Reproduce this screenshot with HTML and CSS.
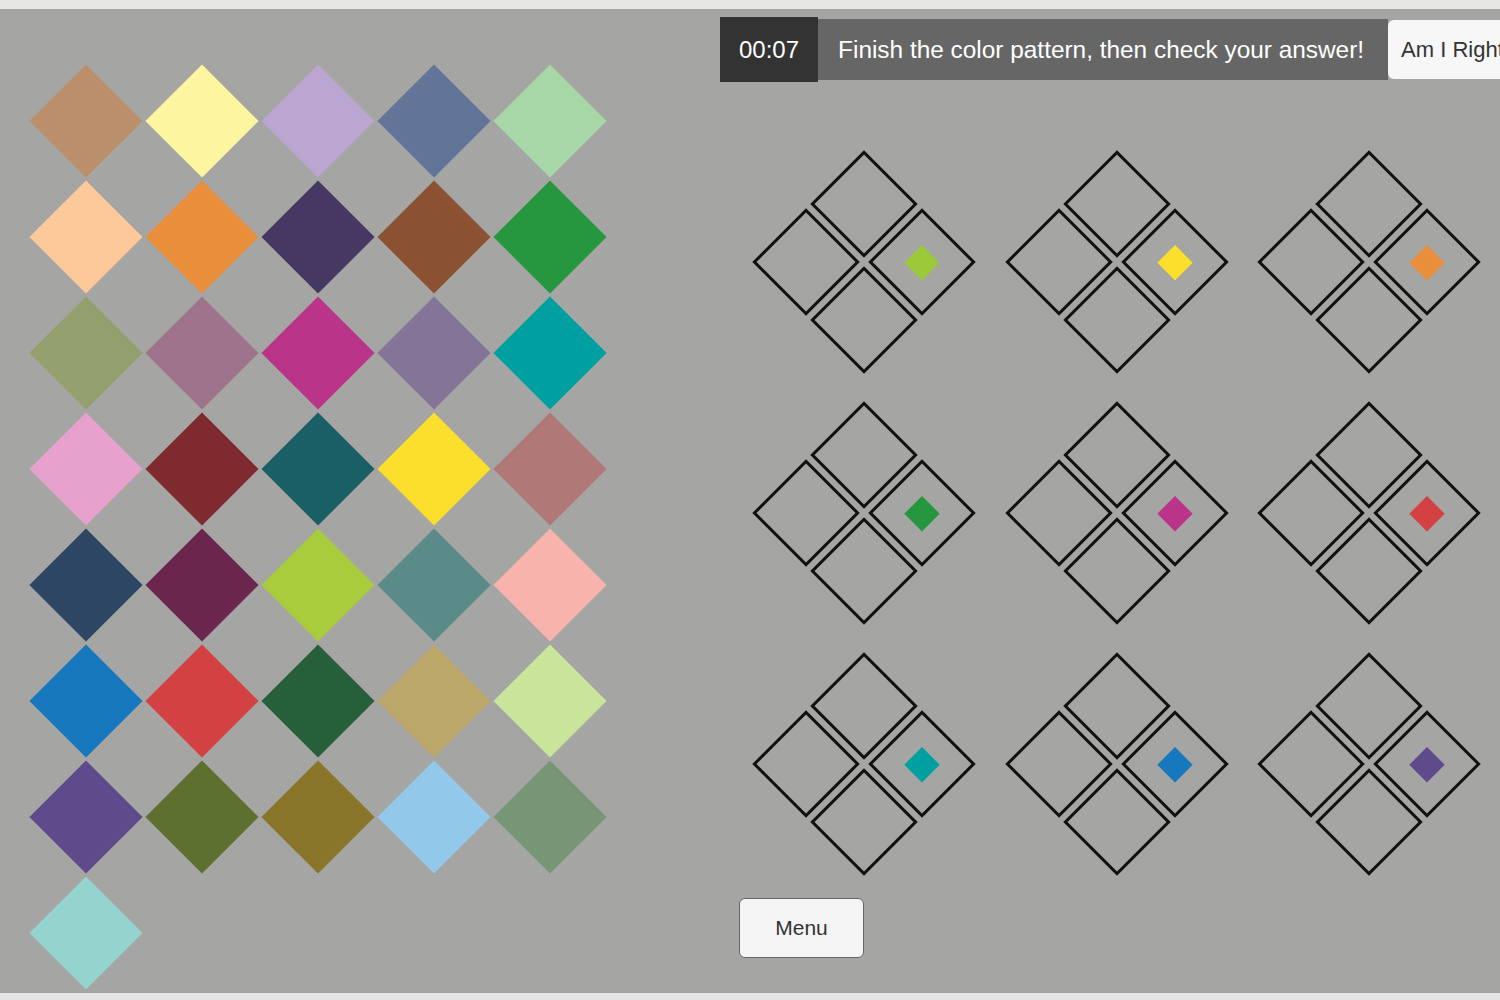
FILE: index.html
```html
<!DOCTYPE html>
<html lang="en">
<head>
<meta charset="utf-8">
<title>Color Pattern</title>
<link rel="stylesheet" href="styles.css">
</head>
<body>
<div class="game">
  <div class="palette">
    <div class="cell"><div class="gem c1"></div></div>
    <div class="cell"><div class="gem c2"></div></div>
    <div class="cell"><div class="gem c3"></div></div>
    <div class="cell"><div class="gem c4"></div></div>
    <div class="cell"><div class="gem c5"></div></div>
    <div class="cell"><div class="gem c6"></div></div>
    <div class="cell"><div class="gem c7"></div></div>
    <div class="cell"><div class="gem c8"></div></div>
    <div class="cell"><div class="gem c9"></div></div>
    <div class="cell"><div class="gem c10"></div></div>
    <div class="cell"><div class="gem c11"></div></div>
    <div class="cell"><div class="gem c12"></div></div>
    <div class="cell"><div class="gem c13"></div></div>
    <div class="cell"><div class="gem c14"></div></div>
    <div class="cell"><div class="gem c15"></div></div>
    <div class="cell"><div class="gem c16"></div></div>
    <div class="cell"><div class="gem c17"></div></div>
    <div class="cell"><div class="gem c18"></div></div>
    <div class="cell"><div class="gem c19"></div></div>
    <div class="cell"><div class="gem c20"></div></div>
    <div class="cell"><div class="gem c21"></div></div>
    <div class="cell"><div class="gem c22"></div></div>
    <div class="cell"><div class="gem c23"></div></div>
    <div class="cell"><div class="gem c24"></div></div>
    <div class="cell"><div class="gem c25"></div></div>
    <div class="cell"><div class="gem c26"></div></div>
    <div class="cell"><div class="gem c27"></div></div>
    <div class="cell"><div class="gem c28"></div></div>
    <div class="cell"><div class="gem c29"></div></div>
    <div class="cell"><div class="gem c30"></div></div>
    <div class="cell"><div class="gem c31"></div></div>
    <div class="cell"><div class="gem c32"></div></div>
    <div class="cell"><div class="gem c33"></div></div>
    <div class="cell"><div class="gem c34"></div></div>
    <div class="cell"><div class="gem c35"></div></div>
    <div class="cell"><div class="gem c36"></div></div>
  </div>

  <div class="board">
    <div class="header">
      <div class="timer">00:07</div>
      <div class="instruction">Finish the color pattern, then check your answer!</div>
      <button class="check">Am I Right?</button>
    </div>

    <div class="puzzles">
      <div class="puzzle"><div class="quad"><div class="slot"></div><div class="slot"><div class="dot d-lime"></div></div><div class="slot"></div><div class="slot"></div></div></div>
      <div class="puzzle"><div class="quad"><div class="slot"></div><div class="slot"><div class="dot d-yellow"></div></div><div class="slot"></div><div class="slot"></div></div></div>
      <div class="puzzle"><div class="quad"><div class="slot"></div><div class="slot"><div class="dot d-orange"></div></div><div class="slot"></div><div class="slot"></div></div></div>
      <div class="puzzle"><div class="quad"><div class="slot"></div><div class="slot"><div class="dot d-green"></div></div><div class="slot"></div><div class="slot"></div></div></div>
      <div class="puzzle"><div class="quad"><div class="slot"></div><div class="slot"><div class="dot d-magenta"></div></div><div class="slot"></div><div class="slot"></div></div></div>
      <div class="puzzle"><div class="quad"><div class="slot"></div><div class="slot"><div class="dot d-red"></div></div><div class="slot"></div><div class="slot"></div></div></div>
      <div class="puzzle"><div class="quad"><div class="slot"></div><div class="slot"><div class="dot d-teal"></div></div><div class="slot"></div><div class="slot"></div></div></div>
      <div class="puzzle"><div class="quad"><div class="slot"></div><div class="slot"><div class="dot d-blue"></div></div><div class="slot"></div><div class="slot"></div></div></div>
      <div class="puzzle"><div class="quad"><div class="slot"></div><div class="slot"><div class="dot d-purple"></div></div><div class="slot"></div><div class="slot"></div></div></div>
    </div>

    <div class="footer">
      <button class="menu">Menu</button>
    </div>
  </div>
</div>
</body>
</html>
```

FILE: styles.css
```css
html, body {
  margin: 0;
  padding: 0;
}
body {
  background: #e6e6e6;
  font-family: "Liberation Sans", Arial, sans-serif;
  overflow: hidden;
}
.game {
  margin-top: 9px;
  height: 984px;
  background: #a5a5a3;
  display: flex;
  overflow: hidden;
}

/* palette */
.palette {
  flex: 0 0 720px;
  box-sizing: border-box;
  padding: 54px 0 0 28px;
  display: grid;
  grid-template-columns: repeat(5, 116px);
  grid-auto-rows: 116px;
  align-content: start;
}
.cell {
  display: flex;
  align-items: center;
  justify-content: center;
}
.gem {
  width: 80px;
  height: 80px;
  transform: rotate(45deg);
}
.c1 { background: #bb8f6b; }
.c2 { background: #fdf59f; }
.c3 { background: #baa6d0; }
.c4 { background: #627599; }
.c5 { background: #a8d8a8; }
.c6 { background: #fdc99b; }
.c7 { background: #e98e3a; }
.c8 { background: #463862; }
.c9 { background: #8a5232; }
.c10 { background: #26973f; }
.c11 { background: #93a06d; }
.c12 { background: #9f738c; }
.c13 { background: #ba348a; }
.c14 { background: #837498; }
.c15 { background: #00a0a0; }
.c16 { background: #e6a2cd; }
.c17 { background: #7e2a2e; }
.c18 { background: #1a5f65; }
.c19 { background: #fbdf2c; }
.c20 { background: #b07876; }
.c21 { background: #2c4663; }
.c22 { background: #6a264d; }
.c23 { background: #a8cc3c; }
.c24 { background: #5a8b89; }
.c25 { background: #f8b4ac; }
.c26 { background: #1878bd; }
.c27 { background: #d34143; }
.c28 { background: #26603b; }
.c29 { background: #bca86a; }
.c30 { background: #c9e59b; }
.c31 { background: #5f4b8b; }
.c32 { background: #5e7030; }
.c33 { background: #8a762a; }
.c34 { background: #92c9ea; }
.c35 { background: #779676; }
.c36 { background: #95d3cf; }

/* board */
.board {
  flex: 1 1 auto;
  min-width: 0;
  padding-top: 8px;
  display: flex;
  flex-direction: column;
}
.header {
  display: flex;
  align-items: center;
  white-space: nowrap;
}
.timer {
  flex: 0 0 auto;
  height: 65px;
  line-height: 65px;
  padding: 0 19px;
  background: #333333;
  color: #ffffff;
  font-size: 24px;
}
.instruction {
  flex: 0 0 auto;
  height: 61px;
  line-height: 61px;
  padding: 0 24px 0 20px;
  background: #666666;
  color: #ffffff;
  font-size: 24.4px;
}
.check {
  flex: 0 0 auto;
  height: 59px;
  padding: 0 13px;
  border: none;
  border-radius: 6px;
  background: #f7f7f7;
  color: #333333;
  font-family: "Liberation Sans", Arial, sans-serif;
  font-size: 22px;
  white-space: nowrap;
}

.puzzles {
  margin: 54px 0 0 18px;
  display: grid;
  grid-template-columns: repeat(3, 252.5px);
  grid-auto-rows: 251px;
}
.puzzle {
  display: flex;
  align-items: center;
  justify-content: center;
}
.quad {
  width: 158px;
  height: 158px;
  display: grid;
  grid-template-columns: 76px 76px;
  grid-template-rows: 76px 76px;
  gap: 6px;
  transform: rotate(45deg);
}
.slot {
  box-sizing: border-box;
  border: 3px solid #111111;
  display: flex;
  align-items: center;
  justify-content: center;
}
.dot {
  width: 25px;
  height: 25px;
}
.d-lime { background: #9cc93a; }
.d-yellow { background: #fbdf2c; }
.d-orange { background: #e98e3a; }
.d-green { background: #26973f; }
.d-magenta { background: #ba348a; }
.d-red { background: #d34143; }
.d-teal { background: #00a0a0; }
.d-blue { background: #1878bd; }
.d-purple { background: #5f4b8b; }

.footer {
  margin: 9px 0 0 19px;
}
.menu {
  width: 125px;
  height: 60px;
  border: 1px solid #666666;
  border-radius: 6px;
  background: #f5f5f5;
  color: #333333;
  font-family: "Liberation Sans", Arial, sans-serif;
  font-size: 21px;
}
```
